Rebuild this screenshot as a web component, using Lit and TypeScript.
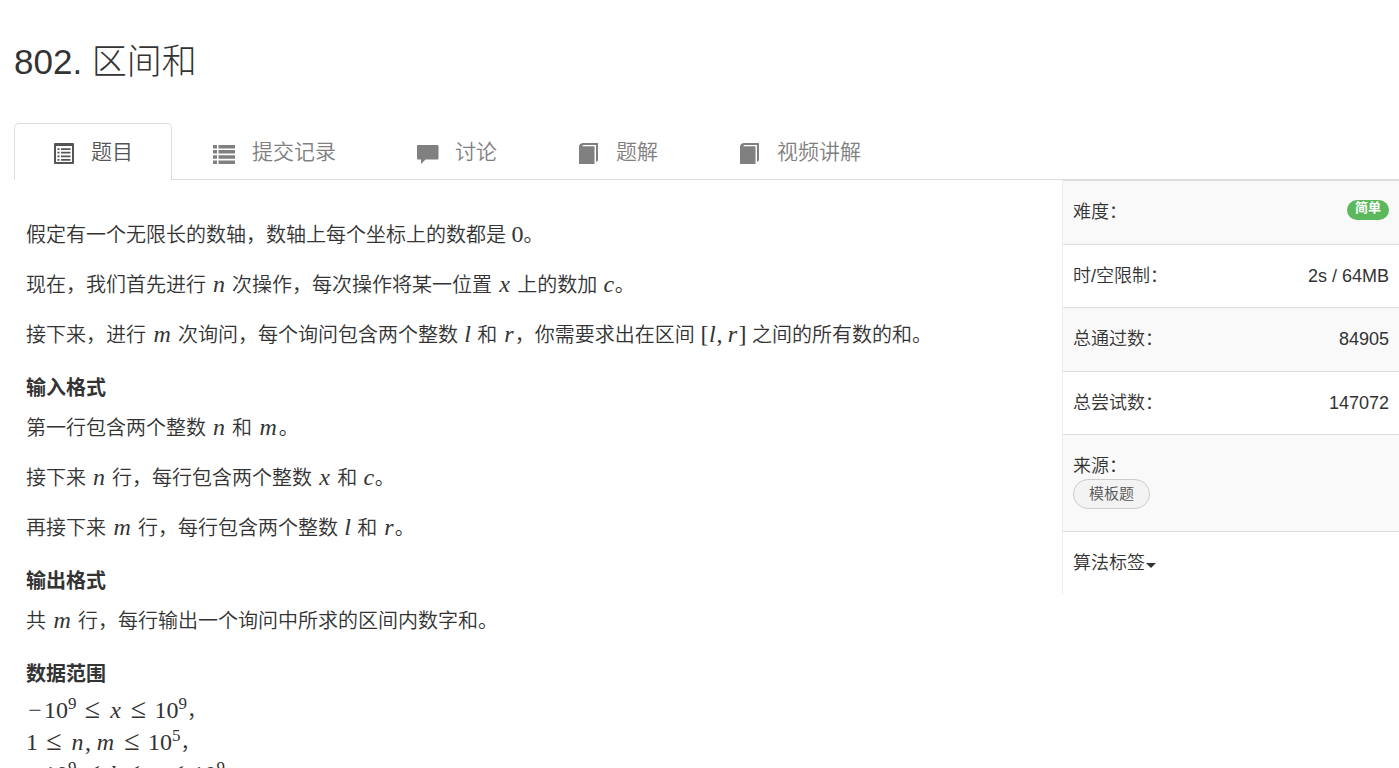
import { LitElement, html, css, svg } from "lit";
import { customElement, state } from "lit/decorators.js";

const icons = {
  listAlt: svg`<path fill-rule="evenodd" d="M2 0h18q1 0 1 1v19q0 1-1 1H2q-1 0-1-1V1q0-1 1-1zM3 3v16h16V3z"/><path d="M4.500 5.200h2v1.800h-2zM8 5.200h9.500v1.800H8zM4.500 8.800h2v1.800h-2zM8 8.800h9.500v1.800H8zM4.500 12.400h2v1.800h-2zM8 12.400h9.500v1.800H8zM4.500 16h2v1.800h-2zM8 16h9.500v1.800H8z"/>`,
  list: svg`<path d="M-1 2h4v3.500h-4zM4.500 2H21v3.500H4.500zM-1 7h4v3.500h-4zM4.500 7H21v3.500H4.500zM-1 12.200h4v3.500h-4zM4.500 12.200H21v3.500H4.500zM-1 17.500h4V21h-4zM4.500 17.500H21V21H4.500z"/>`,
  comment: svg`<path d="M1 2h19.500q1 0 1 1v12.500q0 1-1 1H8.500L4 21v-4.500H1q-1 0-1-1V3q0-1 1-1z"/>`,
  book: svg`<path d="M4.500 0H20v17.500L18 19V2H5.500L4 3.200H16.500V21H1V3q.500-2.500 3.500-3z"/>`,
};

const tabs = [
  { label: "题目", icon: icons.listAlt },
  { label: "提交记录", icon: icons.list },
  { label: "讨论", icon: icons.comment },
  { label: "题解", icon: icons.book },
  { label: "视频讲解", icon: icons.book },
];

const v = (name: string) => html`<i class="var ${name}">${name}</i>`;
const le = html`<span class="rel">≤</span>`;
const pow = (n: number) => html`10<sup>${n}</sup>`;

@customElement("app-root")
export class AppRoot extends LitElement {
  @state() private current = 0;

  static styles = css`
    :host {
      display: block;
      height: 100vh;
      overflow: hidden;
      background: #fff;
      color: #333;
      font-family: "Liberation Sans", "Noto Sans CJK SC", sans-serif;
      font-weight: 350;
    }
    * { box-sizing: border-box; }
    h1 {
      margin: 0;
      padding: 40px 14px;
      font-size: 35px;
      line-height: 43px;
      font-weight: 300;
    }
    .tabs {
      display: flex;
      gap: 3px;
      margin-left: 14px;
      border-bottom: 1px solid #ddd;
    }
    .tab {
      display: flex;
      align-items: center;
      gap: 16px;
      height: 57px;
      margin-bottom: -1px;
      padding: 0 38px;
      border: 1px solid transparent;
      border-bottom: 0;
      border-radius: 5px 5px 0 0;
      color: #808080;
      font-size: 21px;
      line-height: 30px;
      text-decoration: none;
    }
    .tab.active {
      border-color: #ddd;
      background: #fff;
      color: #555;
    }
    .tab svg { width: 22px; height: 22px; fill: currentColor; margin-top: 3px; overflow: visible; }
    .body { display: flex; align-items: flex-start; }
    main {
      flex: 1;
      min-width: 0;
      padding: 39px 26px;
      font-size: 20px;
      line-height: 32px;
    }
    p { margin: 0 0 18px; }
    h2 {
      margin: 0;
      padding: 7px 0 12px;
      font-size: 20px;
      line-height: 24px;
      font-weight: 700;
    }
    .range { margin-top: -3px; }
    .math {
      font-family: "Liberation Serif", serif;
      font-weight: 400;
      font-size: 24px;
      line-height: 24px;
      white-space: nowrap;
    }
    .var { display: inline-block; width: 14px; text-align: center; }
    .n { width: 15px; }
    .m { width: 21px; }
    .l { width: 8px; }
    .c, .r { width: 12px; }
    .rel { display: inline-block; width: 18px; margin: 0 7px; font-size: 28px; text-align: center; }
    .neg { display: inline-block; width: 18px; text-align: center; }
    .comma { margin-right: 4px; }
    sup { font-size: 17px; line-height: 0; vertical-align: 9px; }
    aside { flex: 0 0 337px; border-left: 1px solid #eee; }
    table { width: 100%; border-collapse: separate; border-spacing: 0; font-size: 18px; line-height: 25px; }
    th, td {
      height: 63px;
      padding: 19px 10px 18px;
      border-top: 1px solid #ddd;
      vertical-align: top;
      font-weight: inherit;
      text-align: left;
    }
    td { text-align: right; }
    tr:nth-child(odd) > * { height: 64px; background: #f9f9f9; }
    .badge {
      display: block;
      width: fit-content;
      margin-left: auto;
      padding: 0 8px 4px;
      border-radius: 10px;
      background: #5cb85c;
      color: #fff;
      font-size: 13px;
      line-height: 16px;
      font-weight: 700;
    }
    .source { padding-bottom: 22px; }
    .pill {
      display: block;
      width: fit-content;
      padding: 0 15px;
      border: 1px solid #ccc;
      border-radius: 15px;
      background: #f3f3f3;
      color: #555;
      font-size: 15px;
      line-height: 28px;
      text-decoration: none;
    }
    .toggle {
      display: flex;
      align-items: center;
      gap: 1px;
      padding: 0;
      border: 0;
      background: none;
      color: inherit;
      font: inherit;
    }
    .caret { border: 5px solid transparent; border-top-color: #333; border-bottom: 0; margin-top: 4px; }
  `;

  render() {
    return html`
      <h1>802. 区间和</h1>
      <nav class="tabs">
        ${tabs.map(
          (t, i) => html`<a class="tab ${i === this.current ? "active" : ""}" href="#"
            @click=${(e: Event) => { e.preventDefault(); this.current = i; }}
            ><svg viewBox="0 0 22 22" aria-hidden="true">${t.icon}</svg><span>${t.label}</span></a>`
        )}
      </nav>
      <div class="body">
        <main>
          <p>假定有一个无限长的数轴，数轴上每个坐标上的数都是 <span class="math">0</span>。</p>
          <p>现在，我们首先进行 <span class="math">${v("n")}</span> 次操作，每次操作将某一位置 <span class="math">${v("x")}</span> 上的数加 <span class="math">${v("c")}</span>。</p>
          <p>接下来，进行 <span class="math">${v("m")}</span> 次询问，每个询问包含两个整数 <span class="math">${v("l")}</span> 和 <span class="math">${v("r")}</span>，你需要求出在区间 <span class="math">[${v("l")}<span class="comma">,</span>${v("r")}]</span> 之间的所有数的和。</p>
          <h2>输入格式</h2>
          <p>第一行包含两个整数 <span class="math">${v("n")}</span> 和 <span class="math">${v("m")}</span>。</p>
          <p>接下来 <span class="math">${v("n")}</span> 行，每行包含两个整数 <span class="math">${v("x")}</span> 和 <span class="math">${v("c")}</span>。</p>
          <p>再接下来 <span class="math">${v("m")}</span> 行，每行包含两个整数 <span class="math">${v("l")}</span> 和 <span class="math">${v("r")}</span>。</p>
          <h2>输出格式</h2>
          <p>共 <span class="math">${v("m")}</span> 行，每行输出一个询问中所求的区间内数字和。</p>
          <h2>数据范围</h2>
          <p class="range">
            <span class="math"><span class="neg">−</span>${pow(9)}${le}${v("x")}${le}${pow(9)}</span>，<br />
            <span class="math">1${le}${v("n")}<span class="comma">,</span>${v("m")}${le}${pow(5)}</span>，<br />
            <span class="math"><span class="neg">−</span>${pow(9)}${le}${v("l")}${le}${v("r")}${le}${pow(9)}</span>
          </p>
        </main>
        <aside>
          <table>
            <tr><th scope="row">难度：</th><td><span class="badge">简单</span></td></tr>
            <tr><th scope="row">时/空限制：</th><td>2s / 64MB</td></tr>
            <tr><th scope="row">总通过数：</th><td>84905</td></tr>
            <tr><th scope="row">总尝试数：</th><td>147072</td></tr>
            <tr><th class="source" colspan="2">来源：<a class="pill" href="#">模板题</a></th></tr>
            <tr><th colspan="2"><button class="toggle" type="button">算法标签<span class="caret"></span></button></th></tr>
          </table>
        </aside>
      </div>
    `;
  }
}
